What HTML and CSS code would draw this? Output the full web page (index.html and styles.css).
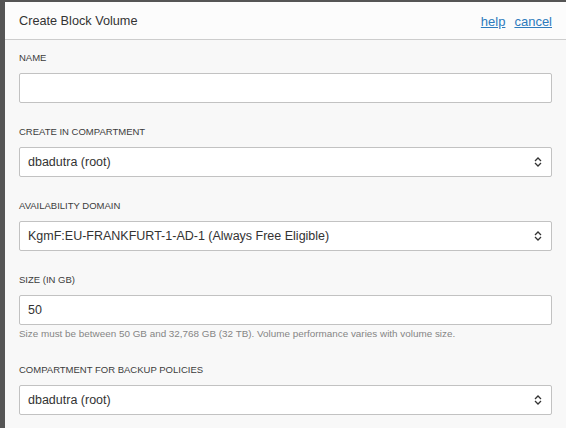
FILE: index.html
```html
<!DOCTYPE html>
<html>
<head>
<meta charset="utf-8">
<link rel="stylesheet" href="styles.css">
</head>
<body>
<div class="frame">
  <div class="panel">
    <div class="header">
      <span class="title">Create Block Volume</span>
      <span class="links"><a href="#">help</a><a href="#">cancel</a></span>
    </div>
    <div class="body">
      <div class="field">
        <div class="label">NAME</div>
        <div class="input"></div>
      </div>
      <div class="field">
        <div class="label">CREATE IN COMPARTMENT</div>
        <div class="input select"><span>dbadutra (root)</span>
          <svg class="arrows" width="8" height="12" viewBox="0 0 8 12"><path d="M1 5 L4 2 L7 5 M1 7 L4 10 L7 7" fill="none" stroke="#333" stroke-width="1.3"/></svg>
        </div>
      </div>
      <div class="field">
        <div class="label">AVAILABILITY DOMAIN</div>
        <div class="input select"><span>KgmF:EU-FRANKFURT-1-AD-1 (Always Free Eligible)</span>
          <svg class="arrows" width="8" height="12" viewBox="0 0 8 12"><path d="M1 5 L4 2 L7 5 M1 7 L4 10 L7 7" fill="none" stroke="#333" stroke-width="1.3"/></svg>
        </div>
      </div>
      <div class="field">
        <div class="label">SIZE (IN GB)</div>
        <div class="input"><span>50</span></div>
        <div class="help">Size must be between 50 GB and 32,768 GB (32 TB). Volume performance varies with volume size.</div>
      </div>
      <div class="field">
        <div class="label">COMPARTMENT FOR BACKUP POLICIES</div>
        <div class="input select"><span>dbadutra (root)</span>
          <svg class="arrows" width="8" height="12" viewBox="0 0 8 12"><path d="M1 5 L4 2 L7 5 M1 7 L4 10 L7 7" fill="none" stroke="#333" stroke-width="1.3"/></svg>
        </div>
      </div>
    </div>
  </div>
</div>
</body>
</html>
```

FILE: styles.css
```css
html, body {
  margin: 0;
  padding: 0;
  width: 566px;
  height: 428px;
  overflow: hidden;
}
body {
  font-family: "Liberation Sans", Arial, sans-serif;
  color: #333;
  background: #555;
}
.frame {
  padding: 2px 0 0 5px;
  height: 428px;
  box-sizing: border-box;
}
.panel {
  background: #f8f8f8;
  height: 100%;
}
.header {
  height: 36px;
  background: #fcfcfc;
  border-bottom: 1px solid #cdcdcd;
  display: flex;
  align-items: center;
  justify-content: space-between;
  padding: 1px 14px 0 14px;
}
.title {
  font-size: 12.7px;
  color: #333;
}
.links {
  display: flex;
  gap: 9px;
  font-size: 13px;
}
.links a {
  color: #2e7bbd;
  text-decoration: underline;
}
.body {
  padding: 11px 14px 0 14px;
}
.field {
  margin-bottom: 22px;
}
.label {
  font-size: 9.5px;
  line-height: 14px;
  height: 14px;
  margin-bottom: 8px;
  color: #3c3c3c;
}
.input {
  height: 30px;
  box-sizing: border-box;
  background: #fff;
  border: 1px solid #c2c2c2;
  border-radius: 2px;
  display: flex;
  align-items: center;
  justify-content: space-between;
  padding: 0 9px 0 8px;
  font-size: 12.5px;
  color: #333;
}
.arrows {
  display: block;
}
.help {
  font-size: 9.9px;
  line-height: 14px;
  margin-top: 2px;
  color: #858585;
}
```
